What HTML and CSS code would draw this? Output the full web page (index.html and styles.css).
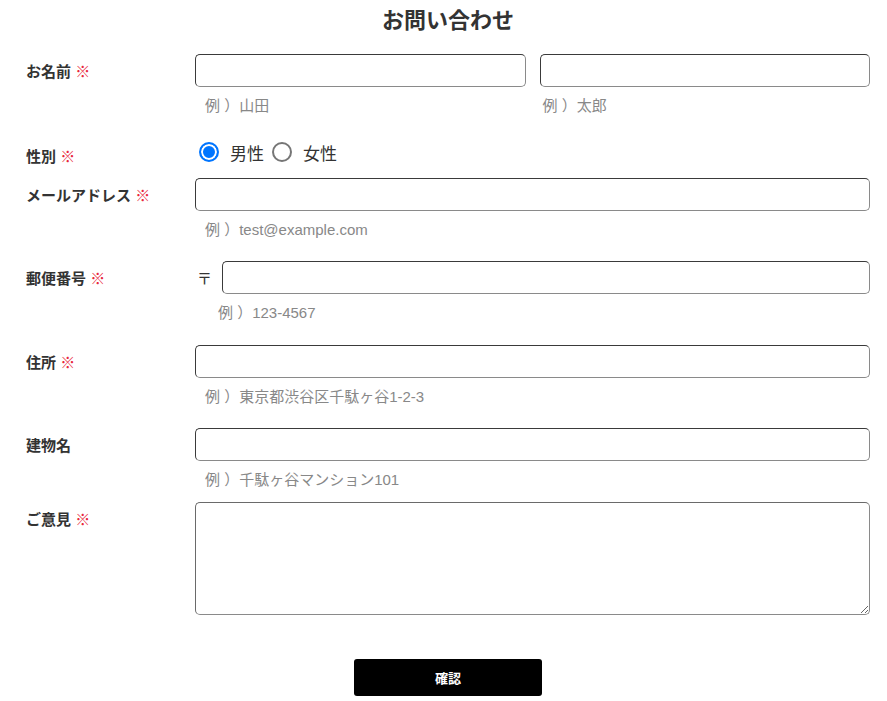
FILE: index.html
```html
<!DOCTYPE html>
<html lang="ja">
<head>
<meta charset="utf-8">
<title>お問い合わせ</title>
<link rel="stylesheet" href="styles.css">
</head>
<body>
<form class="form">
  <h1 class="title">お問い合わせ</h1>

  <div class="row row-name">
    <div class="label">お名前 <span class="req">※</span></div>
    <div class="field split">
      <div class="col">
        <input class="input" type="text">
        <p class="hint">例 ）山田</p>
      </div>
      <div class="col col-last">
        <input class="input" type="text">
        <p class="hint">例 ）太郎</p>
      </div>
    </div>
  </div>

  <div class="row row-gender">
    <div class="label">性別 <span class="req">※</span></div>
    <div class="field radios">
      <label class="radio"><input type="radio" name="g" checked><span>男性</span></label>
      <label class="radio"><input type="radio" name="g"><span>女性</span></label>
    </div>
  </div>

  <div class="row">
    <div class="label">メールアドレス <span class="req">※</span></div>
    <div class="field">
      <input class="input" type="text">
      <p class="hint">例 ）test@example.com</p>
    </div>
  </div>

  <div class="row row-zip">
    <div class="label">郵便番号 <span class="req">※</span></div>
    <div class="field">
      <div class="zip">
        <span class="zip-mark">〒</span>
        <input class="input" type="text">
      </div>
      <p class="hint hint-zip">例 ）123-4567</p>
    </div>
  </div>

  <div class="row">
    <div class="label">住所 <span class="req">※</span></div>
    <div class="field">
      <input class="input" type="text">
      <p class="hint">例 ）東京都渋谷区千駄ヶ谷1-2-3</p>
    </div>
  </div>

  <div class="row row-building">
    <div class="label">建物名</div>
    <div class="field">
      <input class="input" type="text">
      <p class="hint">例 ）千駄ヶ谷マンション101</p>
    </div>
  </div>

  <div class="row row-opinion">
    <div class="label">ご意見 <span class="req">※</span></div>
    <div class="field">
      <textarea class="textarea"></textarea>
    </div>
  </div>

  <div class="actions">
    <button class="submit" type="button">確認</button>
  </div>
</form>
</body>
</html>
```

FILE: styles.css
```css
html, body {
  margin: 0;
  padding: 0;
  background: #fff;
}
body {
  font-family: "Liberation Sans", "Noto Sans CJK JP", sans-serif;
  color: #333;
}
.form {
  padding: 0 17px 0 26px;
}
.title {
  margin: 0;
  padding-top: 6px;
  height: 48px;
  font-size: 22px;
  line-height: 30px;
  font-weight: bold;
  text-align: center;
  color: #333;
}
.row {
  display: grid;
  grid-template-columns: 169px 1fr;
  margin-bottom: 20px;
}
.label {
  padding-top: 8px;
  font-size: 15px;
  line-height: 20px;
  font-weight: bold;
  color: #333;
}
.req {
  color: #e8263a;
  font-weight: normal;
}
.field {
  min-width: 0;
}
.split {
  display: flex;
  gap: 14px;
}
.col {
  flex: 1;
  min-width: 0;
}
.input {
  display: block;
  box-sizing: border-box;
  width: 100%;
  height: 33px;
  margin: 0;
  padding: 0 8px;
  border: 1px solid;
  border-color: #3a3a3a #8a8a8a #8a8a8a #3a3a3a;
  border-radius: 5px;
  background: #fff;
  font-size: 14px;
}
.hint {
  margin: 8px 0 0 10px;
  font-size: 15px;
  line-height: 22px;
  color: #888;
}
.col-last .hint {
  margin-left: 3px;
}
.row-gender {
  margin-bottom: 11px;
}
.row-gender .label {
  padding-top: 10px;
}
.radios {
  display: flex;
  align-items: center;
  height: 30px;
}
.radio {
  display: flex;
  align-items: center;
  font-size: 17px;
  color: #333;
  margin-right: 8px;
}
.radio input {
  appearance: none;
  -webkit-appearance: none;
  box-sizing: border-box;
  width: 20px;
  height: 20px;
  margin: 0 11px 0 4px;
  border: 2px solid #767676;
  border-radius: 50%;
  background: #fff;
}
.radio input:checked {
  border-color: #0075ff;
  background: #0075ff;
  box-shadow: inset 0 0 0 2px #fff;
}
.radio:nth-child(2) input {
  margin-left: 0;
}
.zip {
  display: flex;
  align-items: center;
}
.zip-mark {
  flex: none;
  font-size: 15px;
  width: 27px;
  padding-left: 2px;
  box-sizing: border-box;
}
.hint-zip {
  margin-left: 23px;
}
.row-zip {
  margin-bottom: 21px;
}
.row-building {
  margin-bottom: 11px;
}
.textarea {
  display: block;
  box-sizing: border-box;
  width: 100%;
  height: 113px;
  margin: 0;
  border: 1px solid;
  border-color: #6a6a6a #8a8a8a #8a8a8a #6a6a6a;
  border-radius: 5px;
  background: #fff;
  resize: both;
}
.row-opinion {
  margin-bottom: 44px;
}
.actions {
  display: flex;
  justify-content: center;
}
.submit {
  width: 188px;
  height: 37px;
  border: none;
  border-radius: 3px;
  background: #000;
  color: #fff;
  font-family: "Noto Sans CJK JP", sans-serif;
  font-size: 13px;
  font-weight: bold;
}
```
